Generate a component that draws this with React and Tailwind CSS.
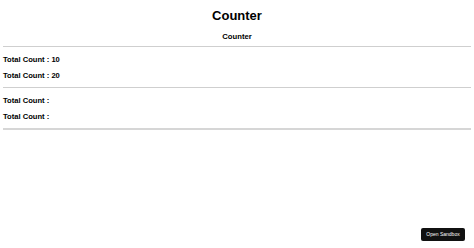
export default function App() {
  const font = { fontFamily: '"Liberation Sans", Arial, Helvetica, sans-serif' };
  const firstCounts = [10, 20];
  const secondCounts = ['', ''];

  return (
    <div className="relative min-h-[248px] w-full bg-white text-black" style={font}>
      <div className="px-[3px]">
        <h1 className="pt-[9px] text-center text-[13px] font-bold leading-[14px]">Counter</h1>
        <h3 className="mt-[9px] text-center text-[7.7px] font-bold leading-[10px]">Counter</h3>
        <hr className="mt-[4px] h-0 border-0 border-t border-[#cfcfcf]" />

        <div className="mt-[8px] flex flex-col gap-[6px]">
          {firstCounts.map((c, i) => (
            <p key={i} className="text-[7.6px] font-bold leading-[10px]">
              Total Count : {c}
            </p>
          ))}
        </div>
        <hr className="mt-[6px] h-0 border-0 border-t border-[#cfcfcf]" />

        <div className="mt-[8px] flex flex-col gap-[6px]">
          {secondCounts.map((c, i) => (
            <p key={i} className="text-[7.6px] font-bold leading-[10px]">
              Total Count : {c}
            </p>
          ))}
        </div>
        <hr className="mt-[6px] h-0 border-0 border-t-2 border-[#d6d6d6]" />
      </div>

      <button
        type="button"
        className="absolute bottom-[7px] right-[9px] flex h-[13px] w-[44px] items-center justify-center rounded-[2px] bg-[#111111] text-[5px] leading-none text-white"
      >
        Open Sandbox
      </button>
    </div>
  );
}
